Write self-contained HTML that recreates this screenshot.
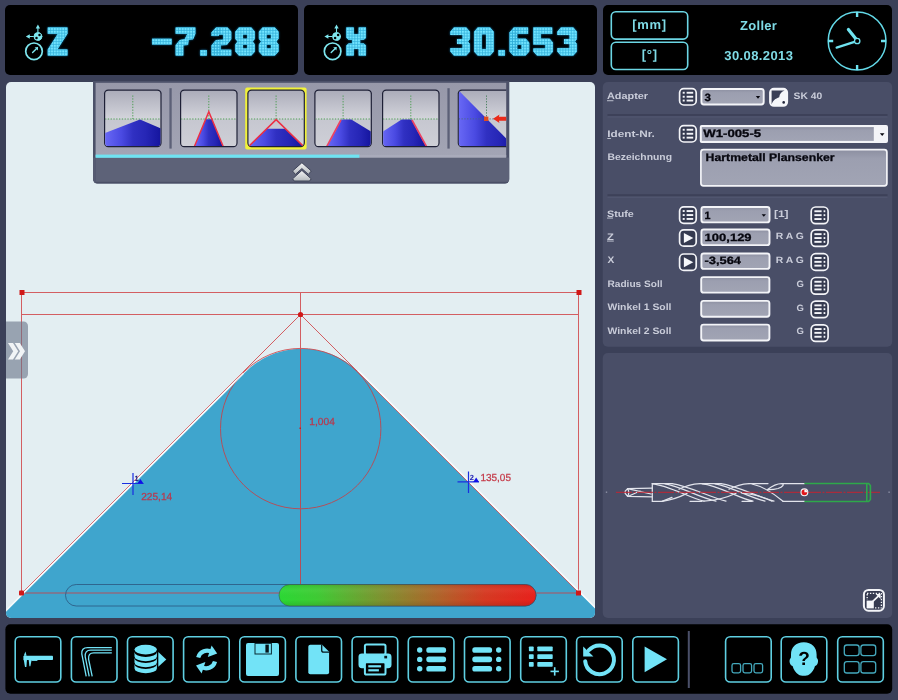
<!DOCTYPE html>
<html>
<head>
<meta charset="utf-8">
<title>Zoller</title>
<style>
html,body{margin:0;padding:0;}
body{width:898px;height:700px;overflow:hidden;background:#3b4058;position:relative;font-family:"Liberation Sans",sans-serif;}
.abs{position:absolute;}
svg{will-change:transform;}
svg text{text-rendering:geometricPrecision;}
.blk{position:absolute;background:#000;border-radius:5px;}
.panel{position:absolute;background:#4a5069;border-radius:5px;}
.lbl{position:absolute;color:#c9cdd9;font-weight:bold;font-size:10px;line-height:12px;white-space:nowrap;letter-spacing:0.2px;}
.inp{position:absolute;background:#a3a6b6;border:2px solid #f4f5f8;border-radius:3px;box-sizing:border-box;color:#0a0a12;font-weight:bold;font-size:11.5px;line-height:14px;padding-left:3px;white-space:nowrap;box-shadow:inset 1px 1px 1px rgba(60,60,80,.6);}
.ico{position:absolute;width:19px;height:19px;}
.sep{position:absolute;height:2px;background:#3c4159;left:607px;width:280px;}
.tb{position:absolute;top:636px;width:46px;height:45px;border:1.5px solid #47b9cf;border-radius:5px;box-sizing:border-box;}
.tb svg{position:absolute;left:0;top:0;}
.cy{color:#66dcf0;}
</style>
</head>
<body>

<!-- top black panels -->
<div class="blk" id="zp" style="left:5px;top:5.4px;width:293px;height:70px;"></div>
<div class="blk" id="xp" style="left:304px;top:5.4px;width:292.5px;height:70px;"></div>
<div class="blk" id="rp" style="left:603px;top:5.4px;width:289px;height:70px;"></div>

<!--TOPSVG--><svg class="abs" style="left:0;top:0" width="898" height="80" viewBox="0 0 898 80">
<defs>
<pattern id="dm" x="0.20" y="2.40" width="2.80" height="2.80" patternUnits="userSpaceOnUse"><rect width="2.80" height="2.80" fill="#35b4dc"/><rect x="0.35" y="0.35" width="2.1" height="2.1" fill="#79e9ff"/></pattern>
<filter id="gl" x="-30%" y="-30%" width="160%" height="160%"><feGaussianBlur stdDeviation="1.3"/></filter>
<filter id="gl2" x="-30%" y="-30%" width="160%" height="160%"><feGaussianBlur stdDeviation="0.6"/></filter>
</defs>
<g filter="url(#gl)" opacity="0.95" fill="#1787c4" fill-rule="evenodd"><path d="M47.80,27.60 L67.40,27.60 L67.40,33.76 L57.32,49.44 L67.40,49.44 L67.40,55.60 L47.80,55.60 L47.80,49.44 L57.88,33.76 L47.80,33.76 Z"/><path d="M152.00,38.80 L171.60,38.80 L171.60,44.40 L152.00,44.40 Z"/><path d="M175.70,27.60 L195.30,27.60 L195.30,34.04 L193.06,39.36 L188.58,39.64 L188.02,44.96 L183.26,45.24 L183.26,55.60 L175.70,55.60 L175.70,44.96 L179.90,39.92 L184.66,39.36 L187.46,33.76 L175.70,33.76 Z"/><path d="M200.30,50.00 L206.74,50.00 L206.74,55.60 L200.30,55.60 Z"/><path d="M216.08,27.60 L227.56,27.60 L231.20,31.80 L231.20,39.36 L226.72,44.96 L220.56,45.24 L220.56,49.72 L231.20,49.72 L231.20,55.60 L211.60,55.60 L211.60,45.24 L216.08,39.92 L223.36,39.64 L223.36,34.60 L218.88,34.60 L218.88,36.00 L211.60,36.00 L211.60,32.36 Z"/><path d="M238.94,27.60 L251.26,27.60 L254.90,31.80 L254.90,38.80 L252.66,41.60 L254.90,44.40 L254.90,51.40 L251.26,55.60 L238.94,55.60 L235.30,51.40 L235.30,44.40 L237.54,41.60 L235.30,38.80 L235.30,31.80 Z M242.86,34.60 L247.34,34.60 L247.34,38.80 L242.86,38.80 Z M242.86,44.40 L247.34,44.40 L247.34,48.60 L242.86,48.60 Z"/><path d="M262.54,27.60 L274.86,27.60 L278.50,31.80 L278.50,38.80 L276.26,41.60 L278.50,44.40 L278.50,51.40 L274.86,55.60 L262.54,55.60 L258.90,51.40 L258.90,44.40 L261.14,41.60 L258.90,38.80 L258.90,31.80 Z M266.46,34.60 L270.94,34.60 L270.94,38.80 L266.46,38.80 Z M266.46,44.40 L270.94,44.40 L270.94,48.60 L266.46,48.60 Z"/><path d="M346.40,27.60 L353.68,27.60 L353.68,34.32 L358.72,34.32 L358.72,27.60 L366.00,27.60 L366.00,37.68 L363.76,39.64 L360.12,39.64 L360.12,43.56 L363.76,43.56 L366.00,45.52 L366.00,55.60 L358.72,55.60 L358.72,48.88 L353.68,48.88 L353.68,55.60 L346.40,55.60 L346.40,45.52 L348.64,43.56 L352.28,43.56 L352.28,39.64 L348.64,39.64 L346.40,37.68 Z"/><path d="M453.94,27.60 L466.26,27.60 L469.90,31.80 L469.90,39.08 L467.94,41.60 L469.90,44.12 L469.90,51.40 L466.26,55.60 L453.94,55.60 L450.30,51.40 L450.30,48.32 L462.62,48.32 L462.62,44.12 L457.02,44.12 L457.02,39.08 L462.62,39.08 L462.62,34.88 L450.30,34.88 L450.30,31.80 Z"/><path d="M477.74,27.60 L490.06,27.60 L493.70,31.80 L493.70,51.40 L490.06,55.60 L477.74,55.60 L474.10,51.40 L474.10,31.80 Z M481.66,34.32 L486.14,34.32 L486.14,48.88 L481.66,48.88 Z"/><path d="M498.50,50.00 L504.94,50.00 L504.94,55.60 L498.50,55.60 Z"/><path d="M513.80,27.60 L528.08,27.60 L528.08,34.04 L517.16,34.04 L517.16,38.80 L525.84,38.80 L529.20,42.72 L529.20,51.40 L525.56,55.60 L513.24,55.60 L509.60,51.40 L509.60,32.36 Z M517.16,44.40 L521.64,44.40 L521.64,48.88 L517.16,48.88 Z"/><path d="M533.40,27.60 L552.16,27.60 L552.16,34.04 L540.68,34.04 L540.68,38.80 L549.64,38.80 L553.00,42.72 L553.00,51.40 L549.36,55.60 L537.04,55.60 L533.40,51.40 L533.40,48.60 L545.44,48.60 L545.44,44.40 L533.40,44.40 Z"/><path d="M560.94,27.60 L573.26,27.60 L576.90,31.80 L576.90,39.08 L574.94,41.60 L576.90,44.12 L576.90,51.40 L573.26,55.60 L560.94,55.60 L557.30,51.40 L557.30,48.32 L569.62,48.32 L569.62,44.12 L564.02,44.12 L564.02,39.08 L569.62,39.08 L569.62,34.88 L557.30,34.88 L557.30,31.80 Z"/></g>
<g filter="url(#gl2)" fill="#2db2e0" fill-rule="evenodd"><path d="M47.80,27.60 L67.40,27.60 L67.40,33.76 L57.32,49.44 L67.40,49.44 L67.40,55.60 L47.80,55.60 L47.80,49.44 L57.88,33.76 L47.80,33.76 Z"/><path d="M152.00,38.80 L171.60,38.80 L171.60,44.40 L152.00,44.40 Z"/><path d="M175.70,27.60 L195.30,27.60 L195.30,34.04 L193.06,39.36 L188.58,39.64 L188.02,44.96 L183.26,45.24 L183.26,55.60 L175.70,55.60 L175.70,44.96 L179.90,39.92 L184.66,39.36 L187.46,33.76 L175.70,33.76 Z"/><path d="M200.30,50.00 L206.74,50.00 L206.74,55.60 L200.30,55.60 Z"/><path d="M216.08,27.60 L227.56,27.60 L231.20,31.80 L231.20,39.36 L226.72,44.96 L220.56,45.24 L220.56,49.72 L231.20,49.72 L231.20,55.60 L211.60,55.60 L211.60,45.24 L216.08,39.92 L223.36,39.64 L223.36,34.60 L218.88,34.60 L218.88,36.00 L211.60,36.00 L211.60,32.36 Z"/><path d="M238.94,27.60 L251.26,27.60 L254.90,31.80 L254.90,38.80 L252.66,41.60 L254.90,44.40 L254.90,51.40 L251.26,55.60 L238.94,55.60 L235.30,51.40 L235.30,44.40 L237.54,41.60 L235.30,38.80 L235.30,31.80 Z M242.86,34.60 L247.34,34.60 L247.34,38.80 L242.86,38.80 Z M242.86,44.40 L247.34,44.40 L247.34,48.60 L242.86,48.60 Z"/><path d="M262.54,27.60 L274.86,27.60 L278.50,31.80 L278.50,38.80 L276.26,41.60 L278.50,44.40 L278.50,51.40 L274.86,55.60 L262.54,55.60 L258.90,51.40 L258.90,44.40 L261.14,41.60 L258.90,38.80 L258.90,31.80 Z M266.46,34.60 L270.94,34.60 L270.94,38.80 L266.46,38.80 Z M266.46,44.40 L270.94,44.40 L270.94,48.60 L266.46,48.60 Z"/><path d="M346.40,27.60 L353.68,27.60 L353.68,34.32 L358.72,34.32 L358.72,27.60 L366.00,27.60 L366.00,37.68 L363.76,39.64 L360.12,39.64 L360.12,43.56 L363.76,43.56 L366.00,45.52 L366.00,55.60 L358.72,55.60 L358.72,48.88 L353.68,48.88 L353.68,55.60 L346.40,55.60 L346.40,45.52 L348.64,43.56 L352.28,43.56 L352.28,39.64 L348.64,39.64 L346.40,37.68 Z"/><path d="M453.94,27.60 L466.26,27.60 L469.90,31.80 L469.90,39.08 L467.94,41.60 L469.90,44.12 L469.90,51.40 L466.26,55.60 L453.94,55.60 L450.30,51.40 L450.30,48.32 L462.62,48.32 L462.62,44.12 L457.02,44.12 L457.02,39.08 L462.62,39.08 L462.62,34.88 L450.30,34.88 L450.30,31.80 Z"/><path d="M477.74,27.60 L490.06,27.60 L493.70,31.80 L493.70,51.40 L490.06,55.60 L477.74,55.60 L474.10,51.40 L474.10,31.80 Z M481.66,34.32 L486.14,34.32 L486.14,48.88 L481.66,48.88 Z"/><path d="M498.50,50.00 L504.94,50.00 L504.94,55.60 L498.50,55.60 Z"/><path d="M513.80,27.60 L528.08,27.60 L528.08,34.04 L517.16,34.04 L517.16,38.80 L525.84,38.80 L529.20,42.72 L529.20,51.40 L525.56,55.60 L513.24,55.60 L509.60,51.40 L509.60,32.36 Z M517.16,44.40 L521.64,44.40 L521.64,48.88 L517.16,48.88 Z"/><path d="M533.40,27.60 L552.16,27.60 L552.16,34.04 L540.68,34.04 L540.68,38.80 L549.64,38.80 L553.00,42.72 L553.00,51.40 L549.36,55.60 L537.04,55.60 L533.40,51.40 L533.40,48.60 L545.44,48.60 L545.44,44.40 L533.40,44.40 Z"/><path d="M560.94,27.60 L573.26,27.60 L576.90,31.80 L576.90,39.08 L574.94,41.60 L576.90,44.12 L576.90,51.40 L573.26,55.60 L560.94,55.60 L557.30,51.40 L557.30,48.32 L569.62,48.32 L569.62,44.12 L564.02,44.12 L564.02,39.08 L569.62,39.08 L569.62,34.88 L557.30,34.88 L557.30,31.80 Z"/></g>
<g  fill="#74e6ff" fill-rule="evenodd"><path d="M47.80,27.60 L67.40,27.60 L67.40,33.76 L57.32,49.44 L67.40,49.44 L67.40,55.60 L47.80,55.60 L47.80,49.44 L57.88,33.76 L47.80,33.76 Z"/><path d="M152.00,38.80 L171.60,38.80 L171.60,44.40 L152.00,44.40 Z"/><path d="M175.70,27.60 L195.30,27.60 L195.30,34.04 L193.06,39.36 L188.58,39.64 L188.02,44.96 L183.26,45.24 L183.26,55.60 L175.70,55.60 L175.70,44.96 L179.90,39.92 L184.66,39.36 L187.46,33.76 L175.70,33.76 Z"/><path d="M200.30,50.00 L206.74,50.00 L206.74,55.60 L200.30,55.60 Z"/><path d="M216.08,27.60 L227.56,27.60 L231.20,31.80 L231.20,39.36 L226.72,44.96 L220.56,45.24 L220.56,49.72 L231.20,49.72 L231.20,55.60 L211.60,55.60 L211.60,45.24 L216.08,39.92 L223.36,39.64 L223.36,34.60 L218.88,34.60 L218.88,36.00 L211.60,36.00 L211.60,32.36 Z"/><path d="M238.94,27.60 L251.26,27.60 L254.90,31.80 L254.90,38.80 L252.66,41.60 L254.90,44.40 L254.90,51.40 L251.26,55.60 L238.94,55.60 L235.30,51.40 L235.30,44.40 L237.54,41.60 L235.30,38.80 L235.30,31.80 Z M242.86,34.60 L247.34,34.60 L247.34,38.80 L242.86,38.80 Z M242.86,44.40 L247.34,44.40 L247.34,48.60 L242.86,48.60 Z"/><path d="M262.54,27.60 L274.86,27.60 L278.50,31.80 L278.50,38.80 L276.26,41.60 L278.50,44.40 L278.50,51.40 L274.86,55.60 L262.54,55.60 L258.90,51.40 L258.90,44.40 L261.14,41.60 L258.90,38.80 L258.90,31.80 Z M266.46,34.60 L270.94,34.60 L270.94,38.80 L266.46,38.80 Z M266.46,44.40 L270.94,44.40 L270.94,48.60 L266.46,48.60 Z"/><path d="M346.40,27.60 L353.68,27.60 L353.68,34.32 L358.72,34.32 L358.72,27.60 L366.00,27.60 L366.00,37.68 L363.76,39.64 L360.12,39.64 L360.12,43.56 L363.76,43.56 L366.00,45.52 L366.00,55.60 L358.72,55.60 L358.72,48.88 L353.68,48.88 L353.68,55.60 L346.40,55.60 L346.40,45.52 L348.64,43.56 L352.28,43.56 L352.28,39.64 L348.64,39.64 L346.40,37.68 Z"/><path d="M453.94,27.60 L466.26,27.60 L469.90,31.80 L469.90,39.08 L467.94,41.60 L469.90,44.12 L469.90,51.40 L466.26,55.60 L453.94,55.60 L450.30,51.40 L450.30,48.32 L462.62,48.32 L462.62,44.12 L457.02,44.12 L457.02,39.08 L462.62,39.08 L462.62,34.88 L450.30,34.88 L450.30,31.80 Z"/><path d="M477.74,27.60 L490.06,27.60 L493.70,31.80 L493.70,51.40 L490.06,55.60 L477.74,55.60 L474.10,51.40 L474.10,31.80 Z M481.66,34.32 L486.14,34.32 L486.14,48.88 L481.66,48.88 Z"/><path d="M498.50,50.00 L504.94,50.00 L504.94,55.60 L498.50,55.60 Z"/><path d="M513.80,27.60 L528.08,27.60 L528.08,34.04 L517.16,34.04 L517.16,38.80 L525.84,38.80 L529.20,42.72 L529.20,51.40 L525.56,55.60 L513.24,55.60 L509.60,51.40 L509.60,32.36 Z M517.16,44.40 L521.64,44.40 L521.64,48.88 L517.16,48.88 Z"/><path d="M533.40,27.60 L552.16,27.60 L552.16,34.04 L540.68,34.04 L540.68,38.80 L549.64,38.80 L553.00,42.72 L553.00,51.40 L549.36,55.60 L537.04,55.60 L533.40,51.40 L533.40,48.60 L545.44,48.60 L545.44,44.40 L533.40,44.40 Z"/><path d="M560.94,27.60 L573.26,27.60 L576.90,31.80 L576.90,39.08 L574.94,41.60 L576.90,44.12 L576.90,51.40 L573.26,55.60 L560.94,55.60 L557.30,51.40 L557.30,48.32 L569.62,48.32 L569.62,44.12 L564.02,44.12 L564.02,39.08 L569.62,39.08 L569.62,34.88 L557.30,34.88 L557.30,31.80 Z"/></g>
<clipPath id="gcp"><path clip-rule="evenodd" d="M47.80,27.60 L67.40,27.60 L67.40,33.76 L57.32,49.44 L67.40,49.44 L67.40,55.60 L47.80,55.60 L47.80,49.44 L57.88,33.76 L47.80,33.76 Z"/><path clip-rule="evenodd" d="M152.00,38.80 L171.60,38.80 L171.60,44.40 L152.00,44.40 Z"/><path clip-rule="evenodd" d="M175.70,27.60 L195.30,27.60 L195.30,34.04 L193.06,39.36 L188.58,39.64 L188.02,44.96 L183.26,45.24 L183.26,55.60 L175.70,55.60 L175.70,44.96 L179.90,39.92 L184.66,39.36 L187.46,33.76 L175.70,33.76 Z"/><path clip-rule="evenodd" d="M200.30,50.00 L206.74,50.00 L206.74,55.60 L200.30,55.60 Z"/><path clip-rule="evenodd" d="M216.08,27.60 L227.56,27.60 L231.20,31.80 L231.20,39.36 L226.72,44.96 L220.56,45.24 L220.56,49.72 L231.20,49.72 L231.20,55.60 L211.60,55.60 L211.60,45.24 L216.08,39.92 L223.36,39.64 L223.36,34.60 L218.88,34.60 L218.88,36.00 L211.60,36.00 L211.60,32.36 Z"/><path clip-rule="evenodd" d="M238.94,27.60 L251.26,27.60 L254.90,31.80 L254.90,38.80 L252.66,41.60 L254.90,44.40 L254.90,51.40 L251.26,55.60 L238.94,55.60 L235.30,51.40 L235.30,44.40 L237.54,41.60 L235.30,38.80 L235.30,31.80 Z M242.86,34.60 L247.34,34.60 L247.34,38.80 L242.86,38.80 Z M242.86,44.40 L247.34,44.40 L247.34,48.60 L242.86,48.60 Z"/><path clip-rule="evenodd" d="M262.54,27.60 L274.86,27.60 L278.50,31.80 L278.50,38.80 L276.26,41.60 L278.50,44.40 L278.50,51.40 L274.86,55.60 L262.54,55.60 L258.90,51.40 L258.90,44.40 L261.14,41.60 L258.90,38.80 L258.90,31.80 Z M266.46,34.60 L270.94,34.60 L270.94,38.80 L266.46,38.80 Z M266.46,44.40 L270.94,44.40 L270.94,48.60 L266.46,48.60 Z"/><path clip-rule="evenodd" d="M346.40,27.60 L353.68,27.60 L353.68,34.32 L358.72,34.32 L358.72,27.60 L366.00,27.60 L366.00,37.68 L363.76,39.64 L360.12,39.64 L360.12,43.56 L363.76,43.56 L366.00,45.52 L366.00,55.60 L358.72,55.60 L358.72,48.88 L353.68,48.88 L353.68,55.60 L346.40,55.60 L346.40,45.52 L348.64,43.56 L352.28,43.56 L352.28,39.64 L348.64,39.64 L346.40,37.68 Z"/><path clip-rule="evenodd" d="M453.94,27.60 L466.26,27.60 L469.90,31.80 L469.90,39.08 L467.94,41.60 L469.90,44.12 L469.90,51.40 L466.26,55.60 L453.94,55.60 L450.30,51.40 L450.30,48.32 L462.62,48.32 L462.62,44.12 L457.02,44.12 L457.02,39.08 L462.62,39.08 L462.62,34.88 L450.30,34.88 L450.30,31.80 Z"/><path clip-rule="evenodd" d="M477.74,27.60 L490.06,27.60 L493.70,31.80 L493.70,51.40 L490.06,55.60 L477.74,55.60 L474.10,51.40 L474.10,31.80 Z M481.66,34.32 L486.14,34.32 L486.14,48.88 L481.66,48.88 Z"/><path clip-rule="evenodd" d="M498.50,50.00 L504.94,50.00 L504.94,55.60 L498.50,55.60 Z"/><path clip-rule="evenodd" d="M513.80,27.60 L528.08,27.60 L528.08,34.04 L517.16,34.04 L517.16,38.80 L525.84,38.80 L529.20,42.72 L529.20,51.40 L525.56,55.60 L513.24,55.60 L509.60,51.40 L509.60,32.36 Z M517.16,44.40 L521.64,44.40 L521.64,48.88 L517.16,48.88 Z"/><path clip-rule="evenodd" d="M533.40,27.60 L552.16,27.60 L552.16,34.04 L540.68,34.04 L540.68,38.80 L549.64,38.80 L553.00,42.72 L553.00,51.40 L549.36,55.60 L537.04,55.60 L533.40,51.40 L533.40,48.60 L545.44,48.60 L545.44,44.40 L533.40,44.40 Z"/><path clip-rule="evenodd" d="M560.94,27.60 L573.26,27.60 L576.90,31.80 L576.90,39.08 L574.94,41.60 L576.90,44.12 L576.90,51.40 L573.26,55.60 L560.94,55.60 L557.30,51.40 L557.30,48.32 L569.62,48.32 L569.62,44.12 L564.02,44.12 L564.02,39.08 L569.62,39.08 L569.62,34.88 L557.30,34.88 L557.30,31.80 Z"/></clipPath>
<g clip-path="url(#gcp)" stroke="#2aa7d4" stroke-width="0.7" fill="none" opacity="0.9"><path d="M47.80 26.60 V56.60 M50.60 26.60 V56.60 M53.40 26.60 V56.60 M56.20 26.60 V56.60 M59.00 26.60 V56.60 M61.80 26.60 V56.60 M64.60 26.60 V56.60 M67.40 26.60 V56.60 M46.80 27.60 H68.40 M46.80 30.40 H68.40 M46.80 33.20 H68.40 M46.80 36.00 H68.40 M46.80 38.80 H68.40 M46.80 41.60 H68.40 M46.80 44.40 H68.40 M46.80 47.20 H68.40 M46.80 50.00 H68.40 M46.80 52.80 H68.40 M46.80 55.60 H68.40 "/><path d="M152.00 26.60 V56.60 M154.80 26.60 V56.60 M157.60 26.60 V56.60 M160.40 26.60 V56.60 M163.20 26.60 V56.60 M166.00 26.60 V56.60 M168.80 26.60 V56.60 M171.60 26.60 V56.60 M151.00 27.60 H172.60 M151.00 30.40 H172.60 M151.00 33.20 H172.60 M151.00 36.00 H172.60 M151.00 38.80 H172.60 M151.00 41.60 H172.60 M151.00 44.40 H172.60 M151.00 47.20 H172.60 M151.00 50.00 H172.60 M151.00 52.80 H172.60 M151.00 55.60 H172.60 "/><path d="M175.70 26.60 V56.60 M178.50 26.60 V56.60 M181.30 26.60 V56.60 M184.10 26.60 V56.60 M186.90 26.60 V56.60 M189.70 26.60 V56.60 M192.50 26.60 V56.60 M195.30 26.60 V56.60 M174.70 27.60 H196.30 M174.70 30.40 H196.30 M174.70 33.20 H196.30 M174.70 36.00 H196.30 M174.70 38.80 H196.30 M174.70 41.60 H196.30 M174.70 44.40 H196.30 M174.70 47.20 H196.30 M174.70 50.00 H196.30 M174.70 52.80 H196.30 M174.70 55.60 H196.30 "/><path d="M200.30 26.60 V56.60 M203.10 26.60 V56.60 M205.90 26.60 V56.60 M208.70 26.60 V56.60 M211.50 26.60 V56.60 M214.30 26.60 V56.60 M217.10 26.60 V56.60 M219.90 26.60 V56.60 M199.30 27.60 H220.90 M199.30 30.40 H220.90 M199.30 33.20 H220.90 M199.30 36.00 H220.90 M199.30 38.80 H220.90 M199.30 41.60 H220.90 M199.30 44.40 H220.90 M199.30 47.20 H220.90 M199.30 50.00 H220.90 M199.30 52.80 H220.90 M199.30 55.60 H220.90 "/><path d="M211.60 26.60 V56.60 M214.40 26.60 V56.60 M217.20 26.60 V56.60 M220.00 26.60 V56.60 M222.80 26.60 V56.60 M225.60 26.60 V56.60 M228.40 26.60 V56.60 M231.20 26.60 V56.60 M210.60 27.60 H232.20 M210.60 30.40 H232.20 M210.60 33.20 H232.20 M210.60 36.00 H232.20 M210.60 38.80 H232.20 M210.60 41.60 H232.20 M210.60 44.40 H232.20 M210.60 47.20 H232.20 M210.60 50.00 H232.20 M210.60 52.80 H232.20 M210.60 55.60 H232.20 "/><path d="M235.30 26.60 V56.60 M238.10 26.60 V56.60 M240.90 26.60 V56.60 M243.70 26.60 V56.60 M246.50 26.60 V56.60 M249.30 26.60 V56.60 M252.10 26.60 V56.60 M254.90 26.60 V56.60 M234.30 27.60 H255.90 M234.30 30.40 H255.90 M234.30 33.20 H255.90 M234.30 36.00 H255.90 M234.30 38.80 H255.90 M234.30 41.60 H255.90 M234.30 44.40 H255.90 M234.30 47.20 H255.90 M234.30 50.00 H255.90 M234.30 52.80 H255.90 M234.30 55.60 H255.90 "/><path d="M258.90 26.60 V56.60 M261.70 26.60 V56.60 M264.50 26.60 V56.60 M267.30 26.60 V56.60 M270.10 26.60 V56.60 M272.90 26.60 V56.60 M275.70 26.60 V56.60 M278.50 26.60 V56.60 M257.90 27.60 H279.50 M257.90 30.40 H279.50 M257.90 33.20 H279.50 M257.90 36.00 H279.50 M257.90 38.80 H279.50 M257.90 41.60 H279.50 M257.90 44.40 H279.50 M257.90 47.20 H279.50 M257.90 50.00 H279.50 M257.90 52.80 H279.50 M257.90 55.60 H279.50 "/><path d="M346.40 26.60 V56.60 M349.20 26.60 V56.60 M352.00 26.60 V56.60 M354.80 26.60 V56.60 M357.60 26.60 V56.60 M360.40 26.60 V56.60 M363.20 26.60 V56.60 M366.00 26.60 V56.60 M345.40 27.60 H367.00 M345.40 30.40 H367.00 M345.40 33.20 H367.00 M345.40 36.00 H367.00 M345.40 38.80 H367.00 M345.40 41.60 H367.00 M345.40 44.40 H367.00 M345.40 47.20 H367.00 M345.40 50.00 H367.00 M345.40 52.80 H367.00 M345.40 55.60 H367.00 "/><path d="M450.30 26.60 V56.60 M453.10 26.60 V56.60 M455.90 26.60 V56.60 M458.70 26.60 V56.60 M461.50 26.60 V56.60 M464.30 26.60 V56.60 M467.10 26.60 V56.60 M469.90 26.60 V56.60 M449.30 27.60 H470.90 M449.30 30.40 H470.90 M449.30 33.20 H470.90 M449.30 36.00 H470.90 M449.30 38.80 H470.90 M449.30 41.60 H470.90 M449.30 44.40 H470.90 M449.30 47.20 H470.90 M449.30 50.00 H470.90 M449.30 52.80 H470.90 M449.30 55.60 H470.90 "/><path d="M474.10 26.60 V56.60 M476.90 26.60 V56.60 M479.70 26.60 V56.60 M482.50 26.60 V56.60 M485.30 26.60 V56.60 M488.10 26.60 V56.60 M490.90 26.60 V56.60 M493.70 26.60 V56.60 M473.10 27.60 H494.70 M473.10 30.40 H494.70 M473.10 33.20 H494.70 M473.10 36.00 H494.70 M473.10 38.80 H494.70 M473.10 41.60 H494.70 M473.10 44.40 H494.70 M473.10 47.20 H494.70 M473.10 50.00 H494.70 M473.10 52.80 H494.70 M473.10 55.60 H494.70 "/><path d="M498.50 26.60 V56.60 M501.30 26.60 V56.60 M504.10 26.60 V56.60 M506.90 26.60 V56.60 M509.70 26.60 V56.60 M512.50 26.60 V56.60 M515.30 26.60 V56.60 M518.10 26.60 V56.60 M497.50 27.60 H519.10 M497.50 30.40 H519.10 M497.50 33.20 H519.10 M497.50 36.00 H519.10 M497.50 38.80 H519.10 M497.50 41.60 H519.10 M497.50 44.40 H519.10 M497.50 47.20 H519.10 M497.50 50.00 H519.10 M497.50 52.80 H519.10 M497.50 55.60 H519.10 "/><path d="M509.60 26.60 V56.60 M512.40 26.60 V56.60 M515.20 26.60 V56.60 M518.00 26.60 V56.60 M520.80 26.60 V56.60 M523.60 26.60 V56.60 M526.40 26.60 V56.60 M529.20 26.60 V56.60 M508.60 27.60 H530.20 M508.60 30.40 H530.20 M508.60 33.20 H530.20 M508.60 36.00 H530.20 M508.60 38.80 H530.20 M508.60 41.60 H530.20 M508.60 44.40 H530.20 M508.60 47.20 H530.20 M508.60 50.00 H530.20 M508.60 52.80 H530.20 M508.60 55.60 H530.20 "/><path d="M533.40 26.60 V56.60 M536.20 26.60 V56.60 M539.00 26.60 V56.60 M541.80 26.60 V56.60 M544.60 26.60 V56.60 M547.40 26.60 V56.60 M550.20 26.60 V56.60 M553.00 26.60 V56.60 M532.40 27.60 H554.00 M532.40 30.40 H554.00 M532.40 33.20 H554.00 M532.40 36.00 H554.00 M532.40 38.80 H554.00 M532.40 41.60 H554.00 M532.40 44.40 H554.00 M532.40 47.20 H554.00 M532.40 50.00 H554.00 M532.40 52.80 H554.00 M532.40 55.60 H554.00 "/><path d="M557.30 26.60 V56.60 M560.10 26.60 V56.60 M562.90 26.60 V56.60 M565.70 26.60 V56.60 M568.50 26.60 V56.60 M571.30 26.60 V56.60 M574.10 26.60 V56.60 M576.90 26.60 V56.60 M556.30 27.60 H577.90 M556.30 30.40 H577.90 M556.30 33.20 H577.90 M556.30 36.00 H577.90 M556.30 38.80 H577.90 M556.30 41.60 H577.90 M556.30 44.40 H577.90 M556.30 47.20 H577.90 M556.30 50.00 H577.90 M556.30 52.80 H577.90 M556.30 55.60 H577.90 "/></g>
<g transform="translate(0.0 0)" stroke="#7ee6ee" fill="none" stroke-width="1.4" stroke-linecap="round"><circle cx="332.6" cy="51.3" r="8.3" stroke-width="1.7"/><path d="M331.2 52.6 L336 47.8" stroke-width="1.4"/><path d="M333.2 47.3 L336.6 47.2 L336.5 50.6 Z" fill="#7ee6ee" stroke="none"/><circle cx="336.5" cy="36.5" r="3.9" fill="#7ee6ee" stroke-width="1"/><circle cx="335.1" cy="38.1" r="1.25" fill="#000" stroke="none"/><circle cx="338.1" cy="35.1" r="1.25" fill="#000" stroke="none"/><path d="M336.5 32 V27.5" stroke-width="1.1"/><path d="M334.3 28.6 L336.5 24.6 L338.7 28.6 Z" fill="#7ee6ee" stroke="none"/><path d="M332 36.5 H327.5" stroke-width="1.1"/><path d="M328.4 34.3 L324.4 36.5 L328.4 38.7 Z" fill="#7ee6ee" stroke="none"/></g>
<g transform="translate(-298.6 0)" stroke="#7ee6ee" fill="none" stroke-width="1.4" stroke-linecap="round"><circle cx="332.6" cy="51.3" r="8.3" stroke-width="1.7"/><path d="M331.2 52.6 L336 47.8" stroke-width="1.4"/><path d="M333.2 47.3 L336.6 47.2 L336.5 50.6 Z" fill="#7ee6ee" stroke="none"/><circle cx="336.5" cy="36.5" r="3.9" fill="#7ee6ee" stroke-width="1"/><circle cx="335.1" cy="38.1" r="1.25" fill="#000" stroke="none"/><circle cx="338.1" cy="35.1" r="1.25" fill="#000" stroke="none"/><path d="M336.5 32 V27.5" stroke-width="1.1"/><path d="M334.3 28.6 L336.5 24.6 L338.7 28.6 Z" fill="#7ee6ee" stroke="none"/><path d="M332 36.5 H327.5" stroke-width="1.1"/><path d="M328.4 34.3 L324.4 36.5 L328.4 38.7 Z" fill="#7ee6ee" stroke="none"/></g>
<g fill="none" stroke="#6cd6e4" stroke-width="1.6">
<rect x="611.3" y="11.8" width="76.4" height="27.3" rx="4.5"/>
<rect x="611.3" y="42.2" width="76.4" height="27.3" rx="4.5"/>
<circle cx="857.1" cy="41" r="28.9" stroke="#63d9e8" stroke-width="1.5"/>
</g>
<g stroke="#6fe3f0" stroke-linecap="butt" fill="none">
<path d="M857.1 12 V17 M857.1 65 V70 M828.2 41 H833.2 M881 41 H886" stroke-width="2.4"/>
<path d="M855.6 38.6 L848.4 29.4" stroke-width="3.2" stroke-linecap="round"/>
<path d="M854.5 41.9 L836.6 47.6" stroke-width="2.2" stroke-linecap="round"/>
<circle cx="857.2" cy="41" r="2.7" stroke-width="1.3" fill="#000"/>
</g>
<g font-family="Liberation Sans, sans-serif" font-weight="bold" font-size="13" fill="#7fdbe6" text-anchor="middle">
<text x="649.6" y="29.3" letter-spacing="0.7">[mm]</text>
<text x="649.8" y="59.3" letter-spacing="0.7">[°]</text>
<text x="758.6" y="30" letter-spacing="0.3">Zoller</text>
<text x="758.8" y="60.2" letter-spacing="0.4">30.08.2013</text>
</g>
</svg><!--/TOPSVG-->

<!-- viewport -->
<div class="abs" id="vp" style="left:6px;top:82px;width:589px;height:536px;background:#e3eef2;border-radius:5px;overflow:hidden;">
<svg id="vpsvg" class="abs" style="left:0;top:0" width="589" height="536" viewBox="6 82 589 536">
<defs>
<linearGradient id="pg" x1="0" y1="0" x2="1" y2="0">
<stop offset="0" stop-color="#2bd934"/><stop offset="0.15" stop-color="#3fcb34"/><stop offset="0.4" stop-color="#7f9330"/><stop offset="0.62" stop-color="#b0642a"/><stop offset="0.8" stop-color="#d63a22"/><stop offset="1" stop-color="#e9201c"/>
</linearGradient>
<linearGradient id="pgv" x1="0" y1="0" x2="0" y2="1">
<stop offset="0" stop-color="#000" stop-opacity="0.10"/><stop offset="0.3" stop-color="#fff" stop-opacity="0.04"/><stop offset="0.7" stop-color="#000" stop-opacity="0"/><stop offset="1" stop-color="#000" stop-opacity="0.12"/>
</linearGradient>
</defs>
<!-- blue fill -->
<path d="M-10 627.5 L244.6 372.9 A80.2 80.2 0 0 1 357.6 371.2 L620 633.3 L620 640 L-10 640 Z" fill="#3fa5cd"/>
<!-- red construction lines -->
<g stroke="#cf3a3e" stroke-width="1" fill="none" opacity="0.8">
<path d="M22 292.5 H579"/>
<path d="M22 314.5 H579"/>
<path d="M21.5 292 V593"/>
<path d="M578.5 292 V593"/>
<path d="M300.5 292 V593"/>
<path d="M22 593 H579"/>
<path d="M300.5 314.5 L22 593"/>
<path d="M300.5 314.5 L579 593"/>
<circle cx="300.7" cy="428.6" r="80.2"/>
</g>
<!-- white halo along edges -->
<path d="M0 616.6 L243.5 373.1" stroke="#fff" stroke-width="1.7" fill="none" opacity="0.72"/>
<path d="M358 370.4 L600 612.4" stroke="#fff" stroke-width="1.6" fill="none" opacity="0.78"/>
<g fill="#d01818">
<rect x="19.5" y="290" width="5" height="5"/>
<rect x="576.5" y="290" width="5" height="5"/>
<circle cx="300.5" cy="314.5" r="2.6"/>
<rect x="19" y="590.5" width="5" height="5" rx="1"/>
<rect x="576" y="590.5" width="5" height="5"/>
<rect x="299.5" y="427.5" width="1.5" height="1.5"/>
</g>
<g font-family="Liberation Sans, sans-serif" font-size="10.2" fill="#b8394e" stroke-width="0.25" stroke="#b8394e">
<text x="309.3" y="424.5" textLength="25.6" lengthAdjust="spacingAndGlyphs">1,004</text>
<text x="141.2" y="499.8" textLength="31" lengthAdjust="spacingAndGlyphs">225,14</text>
<text x="480.4" y="481" fill="#cf3a44" textLength="30.6" lengthAdjust="spacingAndGlyphs">135,05</text>
</g>
<!-- blue crosses -->
<g stroke="#1a2ee0" stroke-width="1.2" fill="none">
<path d="M122 483.5 H143.5 M133 473 V495"/>
<path d="M457.5 481.8 H479 M468.5 471.5 V493"/>
</g>
<path d="M137.4 483.6 L143.5 483.6 L140.4 479 Z" fill="#1010e8"/>
<path d="M473.2 482 L479 482 L476.2 477.6 Z" fill="#1010e8"/>
<text x="134.6" y="480.6" font-size="7.5" font-weight="bold" fill="#141478" font-family="Liberation Sans, sans-serif">1</text>
<text x="469.8" y="479.6" font-size="7.5" font-weight="bold" fill="#1a1ab0" font-family="Liberation Sans, sans-serif">2</text>
<!-- progress pill -->
<rect x="65.5" y="584.5" width="470.5" height="21.5" rx="10.7" fill="none" stroke="#2f668f" stroke-width="1"/>
<rect x="279" y="584.5" width="257" height="21.5" rx="10.7" fill="url(#pg)"/>
<rect x="279" y="584.5" width="257" height="21.5" rx="10.7" fill="url(#pgv)" stroke="#3a4a5a" stroke-opacity="0.55" stroke-width="1"/>
<!-- side tab -->
<path d="M6 321.5 H23.5 a4.5 4.5 0 0 1 4.5 4.5 V374 a4.5 4.5 0 0 1 -4.5 4.5 H6 Z" fill="#6b7589" fill-opacity="0.62"/>
<g fill="#f1f4f6">
<path d="M8 343 h5 l5.2 8.3 l-5.2 8.3 h-5 l5.2 -8.3 z"/>
<path d="M14.8 343 h5 l5.2 8.3 l-5.2 8.3 h-5 l5.2 -8.3 z"/>
</g>
</svg>
</div>

<!--STRIP--><svg class="abs" style="left:90px;top:78px" width="424" height="110" viewBox="90 78 424 110">
<defs>
<linearGradient id="tbg" x1="0" y1="0" x2="0" y2="1"><stop offset="0" stop-color="#a9aab8"/><stop offset="0.5" stop-color="#d3d4db"/><stop offset="0.52" stop-color="#c6c7d0"/><stop offset="1" stop-color="#cfd0d7"/></linearGradient>
<linearGradient id="tbl" x1="0" y1="0" x2="1" y2="0"><stop offset="0" stop-color="#6a6af6"/><stop offset="0.3" stop-color="#4a4ae2"/><stop offset="0.5" stop-color="#3030c2"/><stop offset="0.72" stop-color="#2626b6"/><stop offset="1" stop-color="#13139c"/></linearGradient>
<linearGradient id="lb" x1="0" y1="0" x2="0" y2="1"><stop offset="0" stop-color="#9798a9"/><stop offset="1" stop-color="#a3a5b5"/></linearGradient>
<linearGradient id="chv" x1="0" y1="0" x2="0" y2="1"><stop offset="0" stop-color="#f4f5f6"/><stop offset="1" stop-color="#b4b9bd"/></linearGradient>

<clipPath id="tc0"><rect x="105.2" y="90.7" width="55.2" height="55.4" rx="3.2"/></clipPath>
<clipPath id="tc1"><rect x="181.2" y="90.7" width="55.2" height="55.4" rx="3.2"/></clipPath>
<clipPath id="tc2"><rect x="248.5" y="90.7" width="55.2" height="55.4" rx="3.2"/></clipPath>
<clipPath id="tc3"><rect x="315.5" y="90.7" width="55.2" height="55.4" rx="3.2"/></clipPath>
<clipPath id="tc4"><rect x="383.2" y="90.7" width="55.2" height="55.4" rx="3.2"/></clipPath>
<clipPath id="tc5"><rect x="458.9" y="90.7" width="55.2" height="55.4" rx="3.2"/></clipPath>
<clipPath id="pc"><path d="M93 81 H509.3 V179 a4.5 4.5 0 0 1 -4.5 4.5 H97.5 a4.5 4.5 0 0 1 -4.5 -4.5 Z"/></clipPath>
</defs>
<g clip-path="url(#pc)">
<rect x="93" y="81" width="417" height="103" fill="#4c5169"/>
<rect x="95.6" y="82.8" width="410.6" height="74.8" fill="url(#lb)"/>
<rect x="95.6" y="157.6" width="413.7" height="25.9" fill="#5d6278"/>
<rect x="93" y="157.6" width="2.6" height="26" fill="#565b72"/>
<rect x="95.6" y="181.8" width="413.7" height="1.8" fill="#4a4f66"/>
<rect x="95.6" y="154.6" width="264" height="3.2" fill="#6fe3f2"/>
<rect x="359.6" y="155" width="146.6" height="2.6" fill="#a9abbb"/>
<rect x="169.4" y="88.2" width="2.3" height="60.4" fill="#5c6077"/>
<rect x="447.4" y="88.2" width="2.3" height="60.4" fill="#5c6077"/>
<clipPath id="rc"><rect x="93" y="81" width="413.2" height="103"/></clipPath>
<rect x="104.0" y="89.4" width="57.6" height="57.8" rx="4.2" fill="#1e2036"/><g clip-path="url(#tc0)"><rect x="104.0" y="89" width="58" height="59" fill="url(#tbg)"/><g stroke="#3f9a45" stroke-width="0.9" stroke-dasharray="1.3 1.5" fill="none"><path d="M132.8 95.5 V119"/><path d="M105.0 119 H161.0"/></g><path d="M104.0 133.3 L140.0 119.4 L162.0 129 V148 H104.0 Z" fill="url(#tbl)"/></g>
<rect x="180.0" y="89.4" width="57.6" height="57.8" rx="4.2" fill="#1e2036"/><g clip-path="url(#tc1)"><rect x="180.0" y="89" width="58" height="59" fill="url(#tbg)"/><g stroke="#3f9a45" stroke-width="0.9" stroke-dasharray="1.3 1.5" fill="none"><path d="M208.8 95.5 V119"/><path d="M181.0 119 H237.0"/></g><path d="M205.5 119.2 L212.1 119.2 L223.0 147 H194.6 Z" fill="url(#tbl)"/><path d="M194.2 147 L208.8 111.8 L223.4 147" stroke="#ec3045" stroke-width="1.5" fill="none" stroke-linejoin="miter"/></g>
<rect x="245.2" y="87.6" width="61.4" height="62" rx="2" fill="#f2f23a"/>
<rect x="247.3" y="89.4" width="57.6" height="57.8" rx="4.2" fill="#1e2036"/><g clip-path="url(#tc2)"><rect x="247.3" y="89" width="58" height="59" fill="url(#tbg)"/><g stroke="#3f9a45" stroke-width="0.9" stroke-dasharray="1.3 1.5" fill="none"><path d="M276.1 95.5 V119"/><path d="M248.3 119 H304.3"/></g><path d="M266.6 128.8 L285.6 128.8 L304.1 147 H248.1 Z" fill="url(#tbl)"/><path d="M248.5 146.6 L276.1 119.6 L303.7 146.6" stroke="#ec3045" stroke-width="1.5" fill="none"/></g>
<rect x="314.3" y="89.4" width="57.6" height="57.8" rx="4.2" fill="#1e2036"/><g clip-path="url(#tc3)"><rect x="314.3" y="89" width="58" height="59" fill="url(#tbg)"/><g stroke="#3f9a45" stroke-width="0.9" stroke-dasharray="1.3 1.5" fill="none"><path d="M343.1 95.5 V119"/><path d="M315.3 119 H371.3"/></g><path d="M327.0 147 L341.6 119.4 L351.3 119.4 L372.3 132.4 V147 Z" fill="url(#tbl)"/><path d="M326.5 147 L340.9 120" stroke="#ee4060" stroke-width="1.6"/></g>
<rect x="382.0" y="89.4" width="57.6" height="57.8" rx="4.2" fill="#1e2036"/><g clip-path="url(#tc4)"><rect x="382.0" y="89" width="58" height="59" fill="url(#tbg)"/><g stroke="#3f9a45" stroke-width="0.9" stroke-dasharray="1.3 1.5" fill="none"><path d="M410.8 95.5 V119"/><path d="M383.0 119 H439.0"/></g><path d="M426.3 147 L411.3 119.4 L401.6 119.4 L381.6 132.4 V147 Z" fill="url(#tbl)"/><path d="M426.8 147 L412.0 120" stroke="#ee4060" stroke-width="1.6"/></g>
<g clip-path="url(#rc)"><rect x="457.7" y="89.4" width="57.6" height="57.8" rx="4.2" fill="#1e2036"/><g clip-path="url(#tc5)"><rect x="457.7" y="89" width="58" height="59" fill="url(#tbg)"/><path d="M458.2 90 L515.3 147.6 H457.7 Z" fill="url(#tbl)"/><g stroke="#3f7a55" stroke-width="0.9" stroke-dasharray="1.3 1.5" fill="none"><path d="M486.5 95.5 V119"/><path d="M458.7 118.9 H514.7" stroke="#4a6a7a"/></g><rect x="484.0" y="116.6" width="4.4" height="4.4" fill="#e04a20"/><path d="M493.0 118.8 L499.5 114.6 L498.9 116.8 L508.5 116.8 V120.8 L498.9 120.8 L499.5 123 Z" fill="#ea2a1a"/></g></g>
<g stroke="#3f4459" stroke-width="1" stroke-linejoin="round" fill="url(#chv)"><path d="M301.9 162.7 L311.3 171 L308.4 174.4 L301.9 168.6 L295.4 174.4 L292.5 171 Z"/><path d="M301.9 170.4 L311.2 178.8 L309.6 181 H294.2 L292.6 178.8 Z"/></g>
</g>
</svg><!--/STRIP-->

<!--RIGHT--><svg class="abs" style="left:598px;top:78px" width="300" height="544" viewBox="598 78 300 544">
<defs>
<linearGradient id="inb" x1="0" y1="0" x2="0" y2="1"><stop offset="0" stop-color="#8c8fa1"/><stop offset="0.25" stop-color="#9c9fb0"/><stop offset="1" stop-color="#a1a4b4"/></linearGradient>
</defs>
<rect x="602.8" y="82" width="289.4" height="264.8" rx="5" fill="#494e67"/>
<rect x="602.8" y="353" width="289.4" height="265" rx="5" fill="#494e67"/>
<rect x="607.5" y="114.0" width="280" height="2.4" fill="#3d4159"/>
<rect x="607.5" y="116.4" width="280" height="1" fill="#555a74"/>
<rect x="607.5" y="194.2" width="280" height="2.4" fill="#3d4159"/>
<rect x="607.5" y="196.6" width="280" height="1" fill="#555a74"/>
<text x="607.0" y="99.2" font-family="Liberation Sans, sans-serif" font-weight="bold" font-size="9.4" fill="#c9ccd9" textLength="41.0" lengthAdjust="spacingAndGlyphs">Adapter</text><rect x="607.0" y="100.3" width="6.4" height="0.9" fill="#c9ccd9"/>
<rect x="679.6" y="88.6" width="16.6" height="16.4" rx="4.2" fill="#353a50" stroke="#f3f4f8" stroke-width="1.7"/><rect x="682.7" y="91.8" width="2" height="1.9" fill="#f3f4f8"/><rect x="686.6" y="91.8" width="6.6" height="1.9" fill="#f3f4f8"/><rect x="682.7" y="95.8" width="2" height="1.9" fill="#f3f4f8"/><rect x="686.6" y="95.8" width="6.6" height="1.9" fill="#f3f4f8"/><rect x="682.7" y="99.6" width="2" height="1.9" fill="#f3f4f8"/><rect x="686.6" y="99.6" width="6.6" height="1.9" fill="#f3f4f8"/>
<rect x="701.4" y="89.0" width="62.3" height="15.5" rx="2.4" fill="url(#inb)" stroke="#f3f4f8" stroke-width="1.9"/><text x="704.6" y="100.6" font-family="Liberation Sans, sans-serif" font-weight="bold" font-size="10.6" fill="#07070f" stroke="#07070f" stroke-width="0.3" textLength="6.4" lengthAdjust="spacingAndGlyphs">3</text><path d="M755.8 96.1 h4.4 l-2.2 2.6 Z" fill="#07070f"/>
<rect x="769.9" y="88.6" width="17.4" height="17.4" rx="4" fill="#f5f6f9" stroke="#f5f6f9" stroke-width="1.6"/>
<path d="M771.6 90.4 H784.6 C781.6 91.4 779.6 93.6 779.2 97.2 C777.4 98 776.4 98.4 775.4 99 C773.4 100.4 772.2 102.4 771.6 104.6 Z" fill="#3a3f56"/>
<circle cx="783.7" cy="102.4" r="1.3" fill="#22263a"/>
<text x="793.6" y="99.2" font-family="Liberation Sans, sans-serif" font-weight="bold" font-size="9.4" fill="#c9ccd9" textLength="28.6" lengthAdjust="spacingAndGlyphs">SK 40</text>
<text x="607.3" y="137.0" font-family="Liberation Sans, sans-serif" font-weight="bold" font-size="9.4" fill="#c9ccd9" textLength="47.6" lengthAdjust="spacingAndGlyphs">Ident-Nr.</text><rect x="607.3" y="138.1" width="3.6" height="0.9" fill="#c9ccd9"/>
<rect x="679.6" y="125.6" width="16.6" height="16.4" rx="4.2" fill="#353a50" stroke="#f3f4f8" stroke-width="1.7"/><rect x="682.7" y="128.8" width="2" height="1.9" fill="#f3f4f8"/><rect x="686.6" y="128.8" width="6.6" height="1.9" fill="#f3f4f8"/><rect x="682.7" y="132.8" width="2" height="1.9" fill="#f3f4f8"/><rect x="686.6" y="132.8" width="6.6" height="1.9" fill="#f3f4f8"/><rect x="682.7" y="136.7" width="2" height="1.9" fill="#f3f4f8"/><rect x="686.6" y="136.7" width="6.6" height="1.9" fill="#f3f4f8"/>
<rect x="700.7" y="126" width="186.4" height="16" rx="1" fill="#f3f4f8" stroke="#f3f4f8" stroke-width="1.8"/>
<rect x="701.8" y="127.1" width="172" height="13.8" fill="url(#inb)"/>
<path d="M879.9 133.2 h4.6 l-2.3 2.7 Z" fill="#07070f"/>
<text x="703.2" y="137.4" font-family="Liberation Sans, sans-serif" font-weight="bold" font-size="10.8" fill="#07070f" stroke="#07070f" stroke-width="0.3" textLength="58" lengthAdjust="spacingAndGlyphs">W1-005-5</text>
<text x="607.5" y="159.7" font-family="Liberation Sans, sans-serif" font-weight="bold" font-size="9.4" fill="#c9ccd9" textLength="64.5" lengthAdjust="spacingAndGlyphs">Bezeichnung</text>
<rect x="700.9" y="149.7" width="186" height="36.2" rx="2.6" fill="url(#inb)" stroke="#f3f4f8" stroke-width="1.7"/>
<text x="705.6" y="161.2" font-family="Liberation Sans, sans-serif" font-weight="bold" font-size="10.8" fill="#07070f" stroke="#07070f" stroke-width="0.3" textLength="129" lengthAdjust="spacingAndGlyphs">Hartmetall Plansenker</text>
<text x="607.0" y="216.5" font-family="Liberation Sans, sans-serif" font-weight="bold" font-size="9.4" fill="#c9ccd9" textLength="26.8" lengthAdjust="spacingAndGlyphs">Stufe</text><rect x="607.0" y="217.6" width="6.0" height="0.9" fill="#c9ccd9"/>
<rect x="679.6" y="206.9" width="16.6" height="16.4" rx="4.2" fill="#353a50" stroke="#f3f4f8" stroke-width="1.7"/><rect x="682.7" y="210.1" width="2" height="1.9" fill="#f3f4f8"/><rect x="686.6" y="210.1" width="6.6" height="1.9" fill="#f3f4f8"/><rect x="682.7" y="214.1" width="2" height="1.9" fill="#f3f4f8"/><rect x="686.6" y="214.1" width="6.6" height="1.9" fill="#f3f4f8"/><rect x="682.7" y="218.0" width="2" height="1.9" fill="#f3f4f8"/><rect x="686.6" y="218.0" width="6.6" height="1.9" fill="#f3f4f8"/>
<rect x="701.4" y="207.0" width="68.1" height="15.4" rx="2.4" fill="url(#inb)" stroke="#f3f4f8" stroke-width="1.9"/><text x="704.6" y="218.6" font-family="Liberation Sans, sans-serif" font-weight="bold" font-size="10.6" fill="#07070f" stroke="#07070f" stroke-width="0.3" textLength="6.0" lengthAdjust="spacingAndGlyphs">1</text><path d="M761.6 214.2 h4.4 l-2.2 2.6 Z" fill="#07070f"/>
<text x="774.0" y="216.9" font-family="Liberation Sans, sans-serif" font-weight="bold" font-size="9.6" fill="#c9ccd9" textLength="14.6" lengthAdjust="spacingAndGlyphs">[1]</text>
<rect x="811.2" y="207.0" width="16.9" height="16.6" rx="4.4" fill="#353a50" stroke="#f3f4f8" stroke-width="1.7"/><rect x="814.4" y="210.3" width="7.2" height="1.9" fill="#f3f4f8"/><rect x="823.6" y="210.3" width="1.7" height="1.9" fill="#f3f4f8"/><rect x="814.4" y="214.2" width="7.2" height="1.9" fill="#f3f4f8"/><rect x="823.6" y="214.2" width="1.7" height="1.9" fill="#f3f4f8"/><rect x="814.4" y="218.1" width="7.2" height="1.9" fill="#f3f4f8"/><rect x="823.6" y="218.1" width="1.7" height="1.9" fill="#f3f4f8"/>
<text x="607.0" y="239.5" font-family="Liberation Sans, sans-serif" font-weight="bold" font-size="9.4" fill="#c9ccd9" textLength="6.8" lengthAdjust="spacingAndGlyphs">Z</text><rect x="607.0" y="240.6" width="6.8" height="0.9" fill="#c9ccd9"/>
<rect x="679.6" y="229.8" width="16.6" height="16.4" rx="4.2" fill="#353a50" stroke="#f3f4f8" stroke-width="1.7"/><path d="M683.9 233.1 V243.0 L693.3 238.1 Z" fill="#f6f7fa"/>
<rect x="701.4" y="229.5" width="68.1" height="15.6" rx="2.4" fill="url(#inb)" stroke="#f3f4f8" stroke-width="1.9"/><text x="704.6" y="240.7" font-family="Liberation Sans, sans-serif" font-weight="bold" font-size="10.6" fill="#07070f" stroke="#07070f" stroke-width="0.3" textLength="47.0" lengthAdjust="spacingAndGlyphs">100,129</text>
<text x="775.8" y="239.4" font-family="Liberation Sans, sans-serif" font-weight="bold" font-size="9.2" fill="#c9ccd9" textLength="28.0" lengthAdjust="spacingAndGlyphs">R A G</text>
<rect x="811.2" y="229.8" width="16.9" height="16.6" rx="4.4" fill="#353a50" stroke="#f3f4f8" stroke-width="1.7"/><rect x="814.4" y="233.2" width="7.2" height="1.9" fill="#f3f4f8"/><rect x="823.6" y="233.2" width="1.7" height="1.9" fill="#f3f4f8"/><rect x="814.4" y="237.1" width="7.2" height="1.9" fill="#f3f4f8"/><rect x="823.6" y="237.1" width="1.7" height="1.9" fill="#f3f4f8"/><rect x="814.4" y="240.9" width="7.2" height="1.9" fill="#f3f4f8"/><rect x="823.6" y="240.9" width="1.7" height="1.9" fill="#f3f4f8"/>
<text x="607.4" y="262.6" font-family="Liberation Sans, sans-serif" font-weight="bold" font-size="9.4" fill="#c9ccd9" textLength="6.8" lengthAdjust="spacingAndGlyphs">X</text>
<rect x="679.6" y="254.0" width="16.6" height="16.4" rx="4.2" fill="#353a50" stroke="#f3f4f8" stroke-width="1.7"/><path d="M683.9 257.3 V267.2 L693.3 262.2 Z" fill="#f6f7fa"/>
<rect x="701.4" y="253.5" width="68.1" height="15.4" rx="2.4" fill="url(#inb)" stroke="#f3f4f8" stroke-width="1.9"/><text x="704.6" y="263.9" font-family="Liberation Sans, sans-serif" font-weight="bold" font-size="10.6" fill="#07070f" stroke="#07070f" stroke-width="0.3" textLength="36.4" lengthAdjust="spacingAndGlyphs">-3,564</text>
<text x="775.8" y="262.8" font-family="Liberation Sans, sans-serif" font-weight="bold" font-size="9.2" fill="#c9ccd9" textLength="28.0" lengthAdjust="spacingAndGlyphs">R A G</text>
<rect x="811.2" y="253.7" width="16.9" height="16.6" rx="4.4" fill="#353a50" stroke="#f3f4f8" stroke-width="1.7"/><rect x="814.4" y="257.0" width="7.2" height="1.9" fill="#f3f4f8"/><rect x="823.6" y="257.0" width="1.7" height="1.9" fill="#f3f4f8"/><rect x="814.4" y="260.9" width="7.2" height="1.9" fill="#f3f4f8"/><rect x="823.6" y="260.9" width="1.7" height="1.9" fill="#f3f4f8"/><rect x="814.4" y="264.7" width="7.2" height="1.9" fill="#f3f4f8"/><rect x="823.6" y="264.7" width="1.7" height="1.9" fill="#f3f4f8"/>
<text x="607.5" y="286.5" font-family="Liberation Sans, sans-serif" font-weight="bold" font-size="9.4" fill="#c9ccd9" textLength="55.0" lengthAdjust="spacingAndGlyphs">Radius Soll</text>
<rect x="701.2" y="277.1" width="68.2" height="15.5" rx="2.4" fill="url(#inb)" stroke="#f3f4f8" stroke-width="1.9"/>
<text x="796.4" y="287.0" font-family="Liberation Sans, sans-serif" font-weight="bold" font-size="9.2" fill="#c9ccd9" textLength="7.4" lengthAdjust="spacingAndGlyphs">G</text>
<rect x="811.2" y="277.5" width="16.9" height="16.6" rx="4.4" fill="#353a50" stroke="#f3f4f8" stroke-width="1.7"/><rect x="814.4" y="280.8" width="7.2" height="1.9" fill="#f3f4f8"/><rect x="823.6" y="280.8" width="1.7" height="1.9" fill="#f3f4f8"/><rect x="814.4" y="284.7" width="7.2" height="1.9" fill="#f3f4f8"/><rect x="823.6" y="284.7" width="1.7" height="1.9" fill="#f3f4f8"/><rect x="814.4" y="288.5" width="7.2" height="1.9" fill="#f3f4f8"/><rect x="823.6" y="288.5" width="1.7" height="1.9" fill="#f3f4f8"/>
<text x="607.5" y="310.4" font-family="Liberation Sans, sans-serif" font-weight="bold" font-size="9.4" fill="#c9ccd9" textLength="64.0" lengthAdjust="spacingAndGlyphs">Winkel 1 Soll</text>
<rect x="701.2" y="300.9" width="68.2" height="15.8" rx="2.4" fill="url(#inb)" stroke="#f3f4f8" stroke-width="1.9"/>
<text x="796.4" y="310.8" font-family="Liberation Sans, sans-serif" font-weight="bold" font-size="9.2" fill="#c9ccd9" textLength="7.4" lengthAdjust="spacingAndGlyphs">G</text>
<rect x="811.2" y="301.1" width="16.9" height="16.6" rx="4.4" fill="#353a50" stroke="#f3f4f8" stroke-width="1.7"/><rect x="814.4" y="304.4" width="7.2" height="1.9" fill="#f3f4f8"/><rect x="823.6" y="304.4" width="1.7" height="1.9" fill="#f3f4f8"/><rect x="814.4" y="308.2" width="7.2" height="1.9" fill="#f3f4f8"/><rect x="823.6" y="308.2" width="1.7" height="1.9" fill="#f3f4f8"/><rect x="814.4" y="312.1" width="7.2" height="1.9" fill="#f3f4f8"/><rect x="823.6" y="312.1" width="1.7" height="1.9" fill="#f3f4f8"/>
<text x="607.5" y="334.0" font-family="Liberation Sans, sans-serif" font-weight="bold" font-size="9.4" fill="#c9ccd9" textLength="64.0" lengthAdjust="spacingAndGlyphs">Winkel 2 Soll</text>
<rect x="701.2" y="324.6" width="68.2" height="15.9" rx="2.4" fill="url(#inb)" stroke="#f3f4f8" stroke-width="1.9"/>
<text x="796.4" y="334.4" font-family="Liberation Sans, sans-serif" font-weight="bold" font-size="9.2" fill="#c9ccd9" textLength="7.4" lengthAdjust="spacingAndGlyphs">G</text>
<rect x="811.2" y="324.8" width="16.9" height="16.6" rx="4.4" fill="#353a50" stroke="#f3f4f8" stroke-width="1.7"/><rect x="814.4" y="328.1" width="7.2" height="1.9" fill="#f3f4f8"/><rect x="823.6" y="328.1" width="1.7" height="1.9" fill="#f3f4f8"/><rect x="814.4" y="331.9" width="7.2" height="1.9" fill="#f3f4f8"/><rect x="823.6" y="331.9" width="1.7" height="1.9" fill="#f3f4f8"/><rect x="814.4" y="335.8" width="7.2" height="1.9" fill="#f3f4f8"/><rect x="823.6" y="335.8" width="1.7" height="1.9" fill="#f3f4f8"/>
<g fill="none" stroke="#e2e4ec" stroke-width="1.25" stroke-linecap="round" stroke-linejoin="round">
<path d="M625.2 491.2 L627.6 488.6 L652.2 488.2 M625.2 493.4 L627.6 496.4 L652.2 496.8 M625.2 491.2 V493.4 M627.8 488.8 C629 490.5 629 494.5 627.8 496.2"/>
<path d="M627.6 488.6 L651 494 M629 496 L640 491"/>
<path d="M652.3 483.6 V501.3"/>
<path d="M652.3 483.6 H672 M652.3 501.3 H662 L672 497.4 M690 501.3 H702 M700 483.6 H721 M742 501.3 H752 M749 483.6 H768"/>
<path d="M652.3 483.8 C668 485 690 498 704 501.2"/>
<path d="M665 483.8 C680 486 698 497 716 501.2"/>
<path d="M672 483.6 C688 485.6 708 496.5 726 501.2"/>
<path d="M700 483.6 C690 484.2 684 486.6 679 489.2"/>
<path d="M662 501.3 C672 500 680 497 687 493.4"/>
<path d="M702 483.8 C718 485 738 498 753 501.2"/>
<path d="M715 483.8 C730 486 748 497 765 501.2"/>
<path d="M721 483.6 C737 485.6 756 496.5 774 501.2"/>
<path d="M749 483.6 C740 484.2 734 486.6 729 489.2"/>
<path d="M704 501.2 C716 500.4 728 497 736 493.2"/>
<path d="M752 484 C763 486.4 772 492 783 501.3"/><path d="M742 493 C752 494 764 497 772 501.3"/>
<path d="M767.6 489.6 C772 486 777.6 483.5 781.6 483.5 C784.8 483.9 783 487 778 488.5 C774.6 489.4 770.6 489.8 767.6 489.6"/>
<path d="M781.4 483.5 H804.4 M783 501.4 H804.4"/>
</g>
<path d="M616 492.3 H880" stroke="#c8222e" stroke-width="1" stroke-dasharray="16 1.5 2 1.5" fill="none" opacity="0.95"/>
<path d="M804.4 483.5 H868.6 L870.4 485.6 V499.4 L868.6 501.5 H804.4 M866.8 484 V501" fill="none" stroke="#2ea84a" stroke-width="1.6"/>
<circle cx="804.4" cy="492.3" r="3.4" fill="#e0161c" stroke="#f3f3f6" stroke-width="1.1"/>
<path d="M804.4 492.3 V489.4 A2.9 2.9 0 0 1 807.3 492.3 Z" fill="#f6f6f8"/>
<rect x="605.8" y="491.5" width="1.4" height="1.4" fill="#8d91a6"/><rect x="888.4" y="491.5" width="1.4" height="1.4" fill="#8d91a6"/>
<rect x="863.9" y="589.9" width="20" height="20.8" rx="4.6" fill="#353a50" stroke="#f3f4f8" stroke-width="2"/>
<rect x="866.6" y="600.6" width="7.2" height="7.8" fill="#f6f7fa"/>
<path d="M872.8 601.4 L878.6 595.8" stroke="#f6f7fa" stroke-width="1.7" fill="none"/>
<path d="M875.6 594 H880.6 V599 Z" fill="#f6f7fa"/>
<path d="M867 593.3 H881" stroke="#f6f7fa" stroke-width="1.3" stroke-dasharray="1.4 1.5" fill="none"/>
<path d="M881.4 593 V608.5" stroke="#f6f7fa" stroke-width="1.3" stroke-dasharray="1.4 1.5" fill="none"/>
<path d="M875 607.8 H881" stroke="#f6f7fa" stroke-width="1.3" stroke-dasharray="1.4 1.5" fill="none"/>
<path d="M867.2 594 V600" stroke="#f6f7fa" stroke-width="1.3" stroke-dasharray="1.4 1.5" fill="none"/>
</svg><!--/RIGHT-->

<!--TB--><svg class="abs" style="left:0;top:620px" width="898" height="80" viewBox="0 620 898 80">
<rect x="5.4" y="624.2" width="886.8" height="69.6" rx="5" fill="#000"/>
<rect x="15.2" y="636.8" width="45.6" height="45.2" rx="4.6" fill="none" stroke="#5fcfe2" stroke-width="1.6"/>
<rect x="71.4" y="636.8" width="45.6" height="45.2" rx="4.6" fill="none" stroke="#5fcfe2" stroke-width="1.6"/>
<rect x="127.5" y="636.8" width="45.6" height="45.2" rx="4.6" fill="none" stroke="#5fcfe2" stroke-width="1.6"/>
<rect x="183.6" y="636.8" width="45.6" height="45.2" rx="4.6" fill="none" stroke="#5fcfe2" stroke-width="1.6"/>
<rect x="239.8" y="636.8" width="45.6" height="45.2" rx="4.6" fill="none" stroke="#5fcfe2" stroke-width="1.6"/>
<rect x="295.9" y="636.8" width="45.6" height="45.2" rx="4.6" fill="none" stroke="#5fcfe2" stroke-width="1.6"/>
<rect x="352.1" y="636.8" width="45.6" height="45.2" rx="4.6" fill="none" stroke="#5fcfe2" stroke-width="1.6"/>
<rect x="408.3" y="636.8" width="45.6" height="45.2" rx="4.6" fill="none" stroke="#5fcfe2" stroke-width="1.6"/>
<rect x="464.5" y="636.8" width="45.6" height="45.2" rx="4.6" fill="none" stroke="#5fcfe2" stroke-width="1.6"/>
<rect x="520.7" y="636.8" width="45.6" height="45.2" rx="4.6" fill="none" stroke="#5fcfe2" stroke-width="1.6"/>
<rect x="576.6" y="636.8" width="45.6" height="45.2" rx="4.6" fill="none" stroke="#5fcfe2" stroke-width="1.6"/>
<rect x="632.8" y="636.8" width="45.6" height="45.2" rx="4.6" fill="none" stroke="#5fcfe2" stroke-width="1.6"/>
<rect x="725.6" y="636.8" width="45.6" height="45.2" rx="4.6" fill="none" stroke="#5fcfe2" stroke-width="1.6"/>
<rect x="781.2" y="636.8" width="45.6" height="45.2" rx="4.6" fill="none" stroke="#5fcfe2" stroke-width="1.6"/>
<rect x="837.7" y="636.8" width="45.6" height="45.2" rx="4.6" fill="none" stroke="#5fcfe2" stroke-width="1.6"/>
<rect x="687.8" y="631" width="2" height="57" fill="#4a4f68"/>
<g transform="translate(14.4 0)"><g fill="#72e3f7"><rect x="9" y="655.8" width="29.6" height="4.2" rx="0.8"/><path d="M9.4 655.8 L11 651.6 L12.2 655.8 Z"/><path d="M9.2 659 H12.6 L12 667 H10.6 Z"/><path d="M14.2 659 H17.4 L16 666.2 H15 Z"/><rect x="17" y="659.5" width="6" height="1.4"/></g></g>
<g transform="translate(70.6 0)"><g fill="none" stroke="#72e3f7" stroke-width="1.3" stroke-linecap="butt"><path d="M41.2 647.6 H17.0 Q10.6 647.6 11.2 654.0 L15.6 676.4"/><path d="M41.2 650.2 H20.1 Q14.0 650.2 14.6 656.6 L18.6 676.4"/><path d="M41.2 652.8 H23.2 Q17.4 652.8 18.0 659.2 L21.6 676.4"/></g></g>
<g transform="translate(126.7 0)"><g fill="#72e3f7"><ellipse cx="19" cy="649.6" rx="11.2" ry="4.9"/><path d="M7.8 652.0 a11.2 4.9 0 0 0 22.4 0 v4.4 a11.2 4.9 0 0 1 -22.4 0 Z"/><path d="M7.8 658.0 a11.2 4.9 0 0 0 22.4 0 v4.4 a11.2 4.9 0 0 1 -22.4 0 Z"/><path d="M7.8 664.0 a11.2 4.9 0 0 0 22.4 0 v4.4 a11.2 4.9 0 0 1 -22.4 0 Z"/><path d="M31.6 652 V666.8 L39.6 659.4 Z"/></g></g>
<g transform="translate(182.8 0)"><g fill="none" stroke="#72e3f7" stroke-width="4.2"><path d="M15.4 657.6 A9 9 0 0 1 29.4 652.4"/><path d="M32.2 661.4 A9 9 0 0 1 18.2 666.6"/></g><path d="M25 657 L34.4 653.6 L28.8 645.4 Z" fill="#72e3f7"/><path d="M22.6 662 L13.2 665.4 L18.8 673.6 Z" fill="#72e3f7"/></g>
<g transform="translate(239.0 0)"><rect x="7" y="643" width="33" height="33" rx="2" fill="#72e3f7"/><rect x="16" y="643.4" width="16.4" height="10.6" fill="none" stroke="#0b2a33" stroke-width="1"/><rect x="26.4" y="644.6" width="3.4" height="8" fill="#061318"/></g>
<g transform="translate(295.1 0)"><path d="M15.2 644.8 H27 L34 651.8 V672.2 a2 2 0 0 1 -2 2 H15.2 a2 2 0 0 1 -2 -2 V646.8 a2 2 0 0 1 2 -2 Z" fill="#72e3f7"/><path d="M26.6 644.6 V650.2 a2 2 0 0 0 2 2 H34.2" fill="none" stroke="#04161b" stroke-width="1.3"/></g>
<g transform="translate(351.3 0)"><rect x="7.2" y="653.4" width="33" height="14.8" rx="3.4" fill="#72e3f7"/><rect x="13.6" y="644.4" width="20.6" height="10" rx="1.6" fill="#000" stroke="#72e3f7" stroke-width="2"/><rect x="13.6" y="662.2" width="20.6" height="12.4" rx="1.6" fill="#000" stroke="#72e3f7" stroke-width="2"/><rect x="17" y="665.2" width="12.8" height="2.2" fill="#72e3f7"/><rect x="17" y="669.2" width="10.6" height="2.2" fill="#72e3f7"/><rect x="33" y="655.8" width="2.8" height="2.6" fill="#06161b"/></g>
<g transform="translate(407.5 0)"><g fill="#72e3f7"><circle cx="12.2" cy="650.0" r="2.7"/><rect x="18.8" y="647.2" width="19.8" height="5.6" rx="2.6"/><circle cx="12.2" cy="659.4" r="2.7"/><rect x="18.8" y="656.6" width="19.8" height="5.6" rx="2.6"/><circle cx="12.2" cy="668.8" r="2.7"/><rect x="18.8" y="666.0" width="19.8" height="5.6" rx="2.6"/></g></g>
<g transform="translate(463.7 0)"><g fill="#72e3f7"><circle cx="35" cy="650.0" r="2.7"/><rect x="8.6" y="647.2" width="19.8" height="5.6" rx="2.6"/><circle cx="35" cy="659.4" r="2.7"/><rect x="8.6" y="656.6" width="19.8" height="5.6" rx="2.6"/><circle cx="35" cy="668.8" r="2.7"/><rect x="8.6" y="666.0" width="19.8" height="5.6" rx="2.6"/></g></g>
<g transform="translate(519.9 0)"><g fill="#72e3f7"><rect x="9" y="646.4" width="4.8" height="4.8" rx="0.8"/><rect x="17.4" y="646.4" width="15.4" height="4.8" rx="0.8"/><rect x="9" y="654.2" width="4.8" height="4.8" rx="0.8"/><rect x="17.4" y="654.2" width="15.4" height="4.8" rx="0.8"/><rect x="9" y="662.0" width="4.8" height="4.8" rx="0.8"/><rect x="17.4" y="662.0" width="15.4" height="4.8" rx="0.8"/><rect x="30.6" y="670.6" width="8.4" height="1.6"/><rect x="34" y="667.2" width="1.6" height="8.4"/></g></g>
<g transform="translate(575.8 0)"><path d="M12.9 650.3 A14.4 14.4 0 1 1 9.4 661.2" fill="none" stroke="#72e3f7" stroke-width="4" stroke-linecap="round"/><path d="M7.4 646.4 V656.4 H17.6 Z" fill="#72e3f7"/></g>
<g transform="translate(632.0 0)"><path d="M12.6 646.4 V672.2 L35 659.3 Z" fill="#72e3f7"/></g>
<g transform="translate(724.8 0)"><g fill="none" stroke="#44a9bd" stroke-width="1.3"><rect x="7.2" y="663.6" width="8.6" height="9.2" rx="1.8"/><rect x="18.2" y="663.6" width="8.6" height="9.2" rx="1.8"/><rect x="29.2" y="663.6" width="8.6" height="9.2" rx="1.8"/></g></g>
<g transform="translate(780.4 0)"><path d="M23.4 642.2 C31.4 642.2 36.2 647.4 36.2 654.4 C36.2 656 36.2 657 36.4 658 C37.8 659 38 661.6 37.2 663.6 C36.6 665.2 35.6 666 34.6 666 C33.6 670 31.4 672.8 28.8 674.4 C27.2 675.4 25.4 675.8 23.4 675.8 C21.4 675.8 19.6 675.4 18 674.4 C15.4 672.8 13.2 670 12.2 666 C11.2 666 10.2 665.2 9.6 663.6 C8.8 661.6 9 659 10.4 658 C10.6 657 10.6 656 10.6 654.4 C10.6 647.4 15.4 642.2 23.4 642.2 Z" fill="#72e3f7"/><text x="23.6" y="664.8" font-family="Liberation Sans, sans-serif" font-weight="bold" font-size="19" text-anchor="middle" fill="#000">?</text></g>
<g transform="translate(836.9 0)"><g fill="none" stroke="#44a9bd" stroke-width="1.3"><rect x="7.4" y="645.0" width="14.8" height="10.6" rx="2.6"/><rect x="7.4" y="661.6" width="14.8" height="11.4" rx="2.6"/><rect x="24.0" y="645.0" width="14.8" height="10.6" rx="2.6"/><rect x="24.0" y="661.6" width="14.8" height="11.4" rx="2.6"/></g></g>
</svg><!--/TB-->

</body>
</html>
